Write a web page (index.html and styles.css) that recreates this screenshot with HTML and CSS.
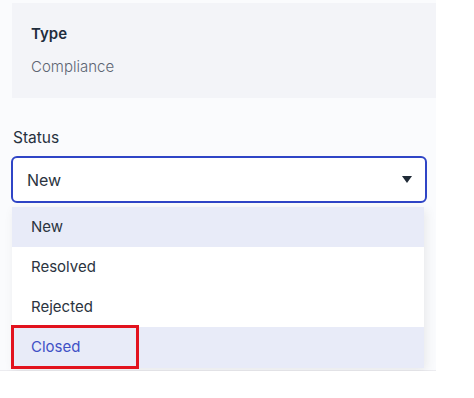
FILE: index.html
```html
<!DOCTYPE html>
<html>
<head lang="en">
    <meta charset="UTF-8">
    <title>Status</title>
    <link rel="stylesheet" href="styles.css">
</head>
<body>
<div class="panel">
    <div class="info-card">
        <div class="info-label">Type</div>
        <div class="info-value">Compliance</div>
    </div>
    <div class="field">
        <div class="field-label">Status</div>
        <div class="select">
            <span>New</span>
            <svg class="caret" width="10" height="7" viewBox="0 0 10 7"><path d="M0 0H10L5 7Z" fill="#1f2a36"/></svg>
        </div>
        <ul class="options">
            <li class="active">New</li>
            <li>Resolved</li>
            <li>Rejected</li>
            <li class="active selected">Closed</li>
        </ul>
        <div class="highlight"></div>
    </div>
</div>
</body>
</html>
```

FILE: styles.css
```css
*{
    margin:0;
    padding:0;
    box-sizing: border-box;
}
ul,ul>li{
    list-style: none;
}
body{
    background:#fff;
    font-family: Inter, "Liberation Sans", sans-serif;
    font-size:15px;
    color:#2b3440;
}
.panel{
    width:436px;
    height:371px;
    padding-top:3px;
    background:#fafbfd;
    border-bottom:1px solid #ececf0;
}
.info-card{
    margin-left:12px;
    height:95px;
    padding:22px 19px 0;
    background:#f3f4f8;
}
.info-label{
    font-weight:600;
    color:#1f2d3d;
    line-height:18px;
}
.info-value{
    margin-top:15px;
    color:#5c6572;
    font-weight:300;
    line-height:18px;
}
.field{
    position:relative;
    padding-left:11px;
}
.field-label{
    margin:31px 0 0 2px;
    line-height:18px;
    font-size:15.5px;
    color:#27313d;
}
/* open select */
.select{
    margin-top:9px;
    width:416px;
    height:47px;
    border:2px solid #2f45c6;
    border-radius:6px;
    background:#fff;
    display:flex;
    align-items:center;
    justify-content:space-between;
    padding:0 13px 0 14px;
    font-size:16px;
}
.options{
    margin:4px 0 0 1px;
    width:412px;
    background:#fff;
    box-shadow: 2px 3px 10px rgba(0,0,0,.08);
}
.options>li{
    height:40px;
    line-height:40px;
    padding-left:19px;
    color:#2b3440;
}
.options>li.active{
    background:#e8ebf8;
}
.options>li.selected{
    color:#3f51c6;
    height:41px;
}
.highlight{
    position:absolute;
    left:11px;
    bottom:-1px;
    width:128px;
    height:44px;
    border:3px solid #e2121e;
}
```
